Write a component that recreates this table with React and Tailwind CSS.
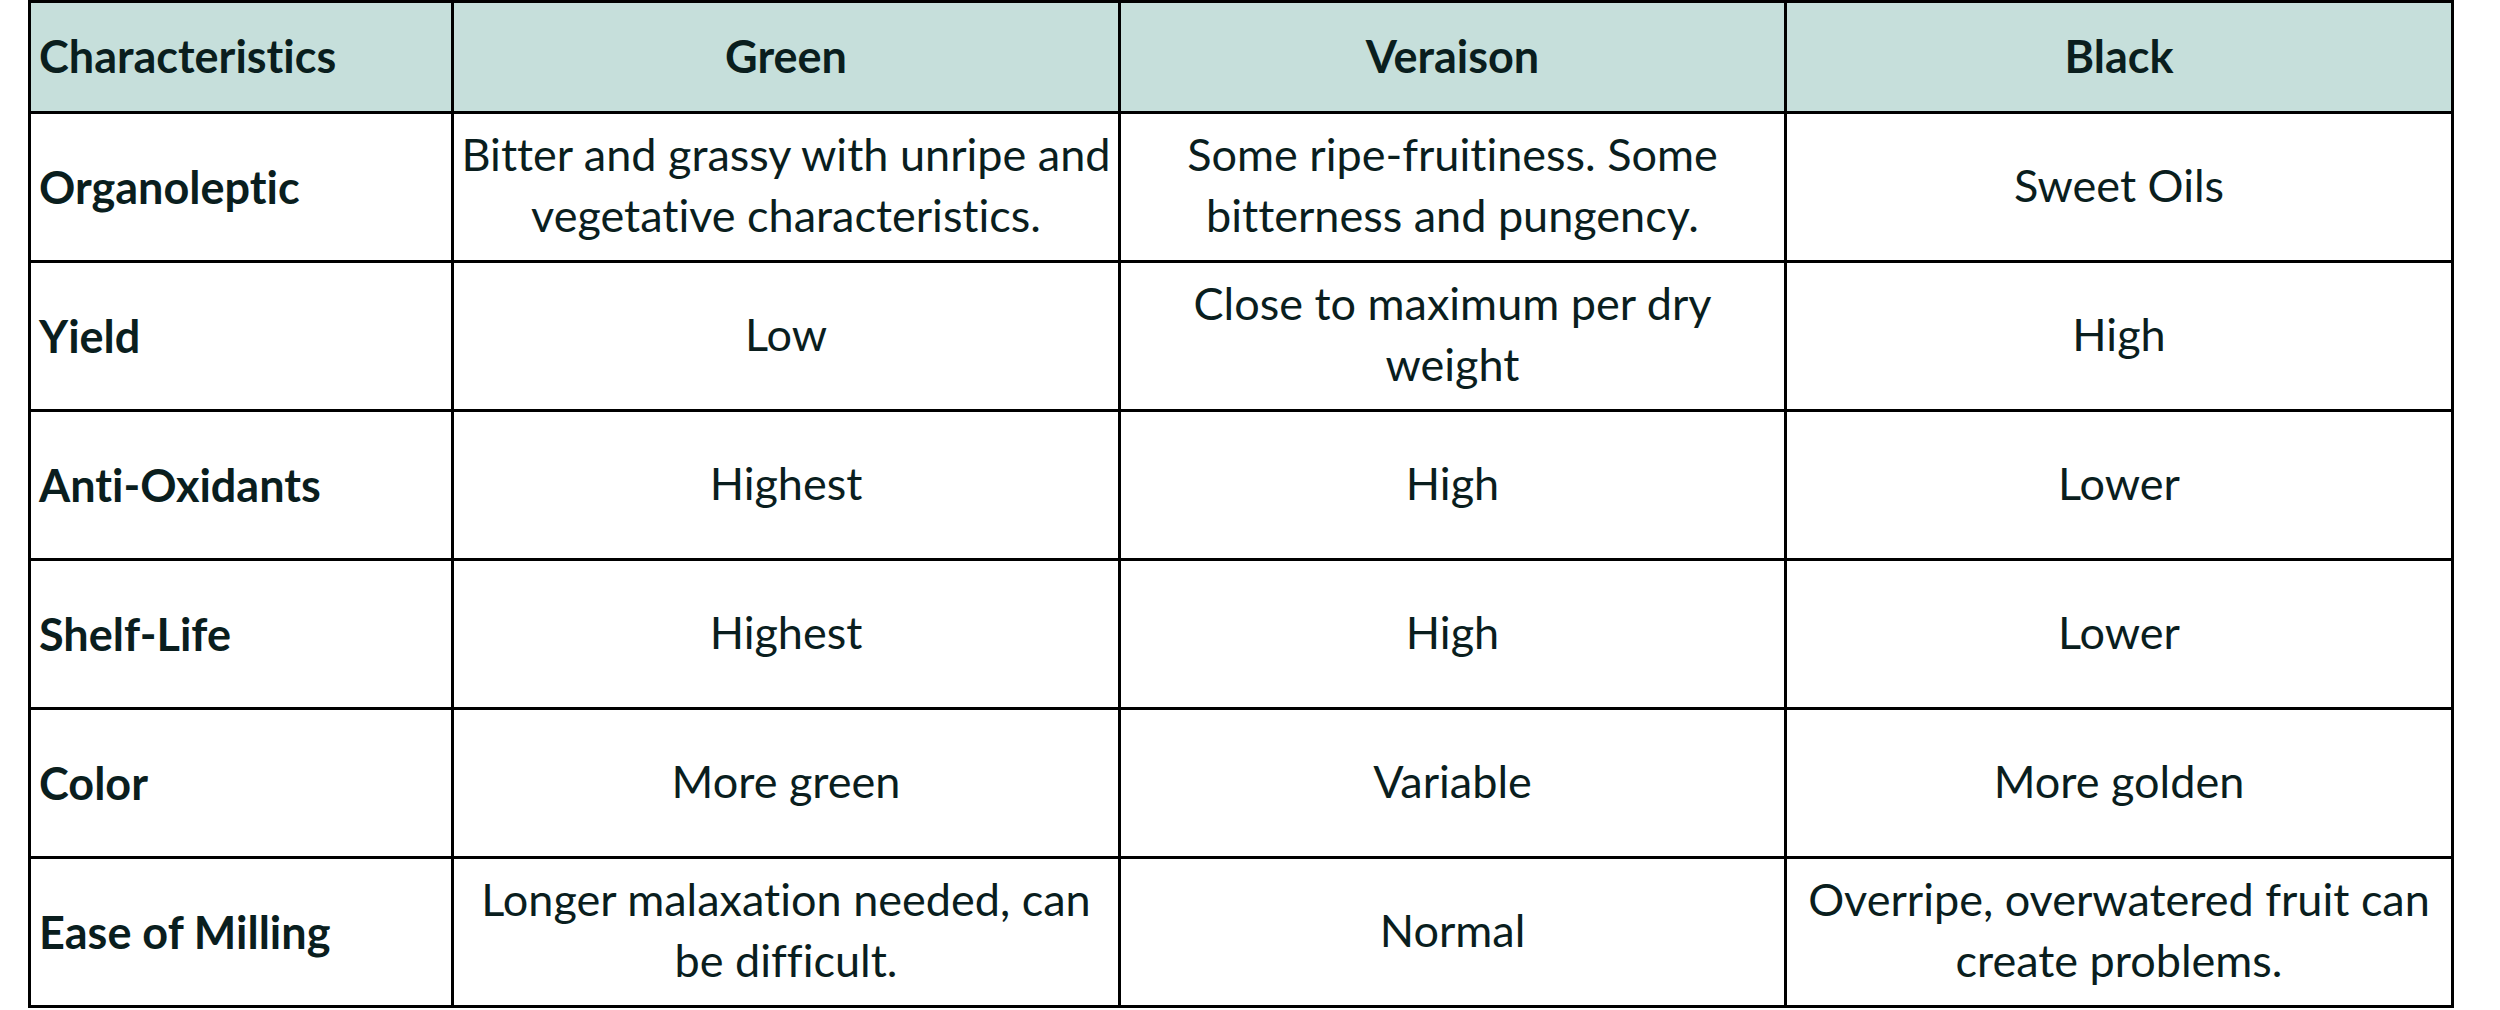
import React from "react";

const rows = [
  ["Organoleptic", ["Bitter and grassy with unripe and", "vegetative characteristics."], ["Some ripe-fruitiness. Some", "bitterness and pungency."], ["Sweet Oils"]],
  ["Yield", ["Low"], ["Close to maximum per dry", "weight"], ["High"]],
  ["Anti-Oxidants", ["Highest"], ["High"], ["Lower"]],
  ["Shelf-Life", ["Highest"], ["High"], ["Lower"]],
  ["Color", ["More green"], ["Variable"], ["More golden"]],
  ["Ease of Milling", ["Longer malaxation needed, can", "be difficult."], ["Normal"], ["Overripe, overwatered fruit can", "create problems."]],
];

function Cell({ lines }) {
  return (
    <div className="bg-white flex flex-col items-center justify-center text-center pb-[4px]">
      {lines.map((l) => (
        <span key={l} className="whitespace-nowrap">{l}</span>
      ))}
    </div>
  );
}

export default function App() {
  return (
    <div className="w-[2500px] h-[1010px] bg-white pl-[28px] text-[#0a1e1e] font-['Lato',sans-serif] [font-variant-ligatures:none]">
      <div className="w-[2426px] bg-black p-[3px] grid grid-cols-[420px_664px_663px_664px] grid-rows-[108px_repeat(6,146px)] gap-[3px] text-[45px] leading-[61px]">
        <div className="bg-[#c6dfdb] flex items-center pl-[8px] font-bold pb-[2px]">Characteristics</div>
        <div className="bg-[#c6dfdb] flex items-center justify-center font-bold pb-[2px]">Green</div>
        <div className="bg-[#c6dfdb] flex items-center justify-center font-bold pb-[2px]">Veraison</div>
        <div className="bg-[#c6dfdb] flex items-center justify-center font-bold pb-[2px]">Black</div>
        {rows.map((r) => (
          <React.Fragment key={r[0]}>
            <div className="bg-white flex items-center pl-[8px] font-bold">{r[0]}</div>
            <Cell lines={r[1]} />
            <Cell lines={r[2]} />
            <Cell lines={r[3]} />
          </React.Fragment>
        ))}
      </div>
    </div>
  );
}
